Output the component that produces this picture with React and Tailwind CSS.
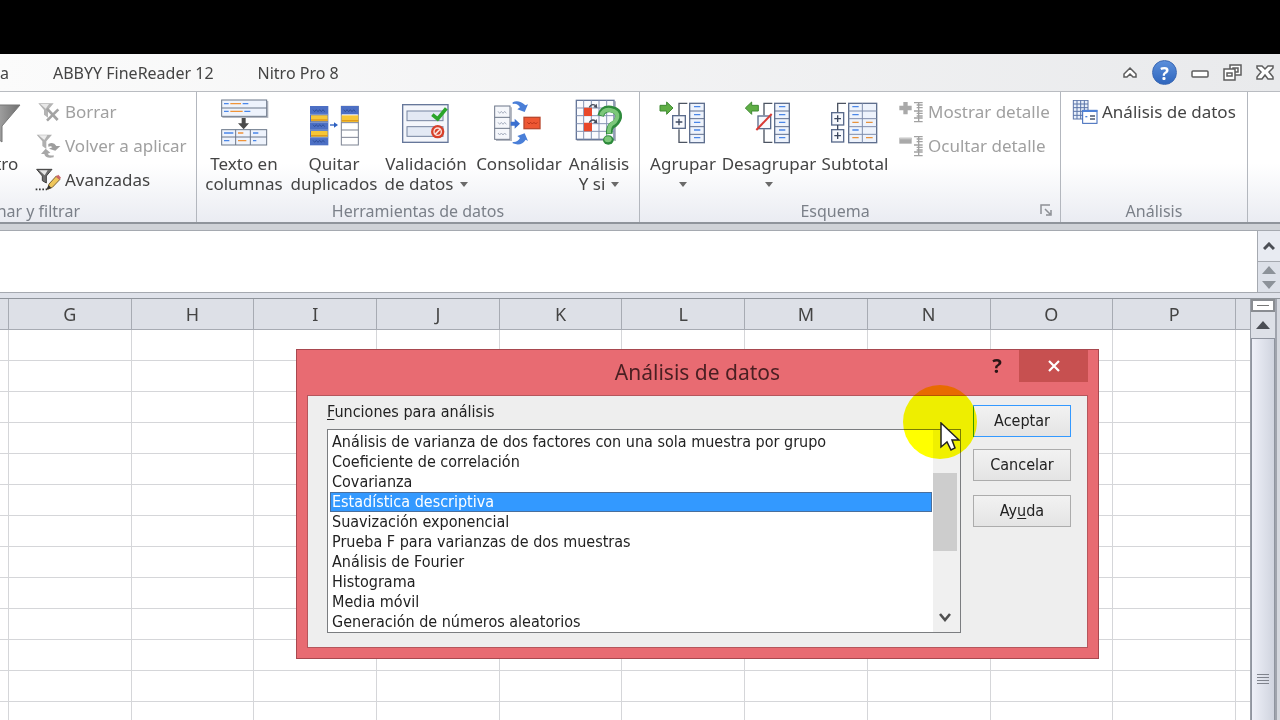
import React, { useState } from 'react';

// =========================================================================
// 1. DATA
// =========================================================================
const COLUMNS = ['G', 'H', 'I', 'J', 'K', 'L', 'M', 'N', 'O', 'P'];
const ROWS = Array.from({ length: 13 }, (_, i) => i + 1);

const FUNCTIONS = [
  'Análisis de varianza de dos factores con una sola muestra por grupo',
  'Coeficiente de correlación',
  'Covarianza',
  'Estadística descriptiva',
  'Suavización exponencial',
  'Prueba F para varianzas de dos muestras',
  'Análisis de Fourier',
  'Histograma',
  'Media móvil',
  'Generación de números aleatorios',
];

// =========================================================================
// 2. ICONS
// =========================================================================
const BigIcon = ({ viewBox, children }) => (
  <svg viewBox={viewBox} className="h-12 w-[50px] shrink-0" fill="none" aria-hidden="true">{children}</svg>
);

const SmallIcon = ({ viewBox, children }) => (
  <svg viewBox={viewBox} className="h-6 w-[26px] shrink-0" fill="none" aria-hidden="true">{children}</svg>
);

const TextColumnsIcon = () => (
  <BigIcon viewBox="72 24 150 144">
    <path d="M82 82H218V33" stroke="#b5b9c2" strokeWidth="4" />
    <rect x="80" y="30" width="135" height="49" fill="#eef3fc" stroke="#6b7688" strokeWidth="3" />
    <path d="M80 54H215" stroke="#6b7688" strokeWidth="3" />
    <path d="M87 41H101M143 41H160M87 64H101M148 64H166" stroke="#4a86e8" strokeWidth="4" />
    <path d="M106 41H138M106 64H143" stroke="#ef9338" strokeWidth="4" />
    <path d="M140 84H152V100H162L146 118L129 100H140Z" fill="#4a4a4a" />
    <rect x="80" y="119" width="135" height="46" fill="#eef3fc" stroke="#6b7688" strokeWidth="3" />
    <path d="M80 141H215M122 119V165M166 119V165" stroke="#6b7688" strokeWidth="3" />
    <path d="M87 129H115M174 129H190M87 152H103M174 152H184" stroke="#4a86e8" strokeWidth="4" />
    <path d="M129 129H145M129 152H154" stroke="#ef9338" strokeWidth="4" />
  </BigIcon>
);

const DuplicatesIcon = () => (
  <BigIcon viewBox="342 24 150 144">
    <rect x="345" y="48" width="55" height="118" fill="#4c6fc4" />
    <path d="M348 76H398V94H348ZM348 123H398V140H348Z" fill="#f7c637" />
    <path d="M348 90H398M348 137H398" stroke="#e09b1c" strokeWidth="4" />
    <path d="M354 59l5 6 5-6 5 6 5-6 5 6 5-6 5 6M354 104l5 6 5-6 5 6 5-6 5 6 5-6 5 6M354 151l5 6 5-6 5 6 5-6 5 6 5-6 5 6" stroke="#2f4f9c" strokeWidth="3" />
    <path d="M345 73H400M345 97H400M345 120H400M345 143H400" stroke="#a5b2d3" strokeWidth="2" />
    <path d="M405 105H420" stroke="#2c5fc0" strokeWidth="4" />
    <path d="M417 97L429 105L417 113Z" fill="#2c5fc0" />
    <rect x="439" y="49" width="51" height="116" fill="#fff" stroke="#7c8392" strokeWidth="3" />
    <path d="M438 48H491V73H438Z" fill="#4c6fc4" />
    <path d="M446 59l5 6 5-6 5 6 5-6 5 6 5-6 5 6" stroke="#2f4f9c" strokeWidth="3" />
    <path d="M440 76H490V96H440Z" fill="#f7c637" />
    <path d="M440 92H490" stroke="#e09b1c" strokeWidth="4" />
    <path d="M439 98H490M439 120H490M439 142H490" stroke="#7c8392" strokeWidth="3" />
  </BigIcon>
);

const ValidationIcon = () => (
  <BigIcon viewBox="64 24 150 144">
    <rect x="69" y="44" width="136" height="113" fill="#f4f6fb" stroke="#66779a" strokeWidth="4" />
    <rect x="82" y="63" width="108" height="29" fill="#e3e9f4" stroke="#75839f" strokeWidth="3" />
    <rect x="82" y="110" width="108" height="29" fill="#e3e9f4" stroke="#75839f" strokeWidth="3" />
    <path d="M158 74L174 87L200 55" stroke="#2aa52a" strokeWidth="11" />
    <circle cx="174" cy="125" r="20" fill="#d8402a" />
    <circle cx="174" cy="125" r="11" stroke="#fbe3dc" strokeWidth="4" />
    <path d="M166 133L182 117" stroke="#fbe3dc" strokeWidth="5" />
  </BigIcon>
);

const ConsolidateIcon = () => (
  <BigIcon viewBox="342 24 150 144">
    <path d="M348 151H394V52" stroke="#b5b9c2" strokeWidth="4" />
    <rect x="344" y="48" width="46" height="100" fill="#f5f7fb" stroke="#6d7789" strokeWidth="3" />
    <path d="M344 82H390M344 115H390" stroke="#6d7789" strokeWidth="3" />
    <path d="M354 64l5 6 5-6 5 6 5-6 5 6M354 97l5 6 5-6 5 6 5-6 5 6M354 129l5 6 5-6 5 6 5-6 5 6" stroke="#a8b0c0" strokeWidth="3" />
    <path d="M392 95H404V86L420 101L404 116V107H392Z" fill="#3a6fd0" />
    <path d="M398 37Q416 28 436 46L444 43L434 66L412 58L420 52Q412 38 398 42Z" fill="#4a7fd8" />
    <path d="M398 160Q424 170 437 149L444 153L434 130L412 138L420 144Q412 158 398 156Z" fill="#4a7fd8" />
    <rect x="432" y="82" width="48" height="34" fill="#ee5733" stroke="#b9482f" strokeWidth="4" />
    <path d="M442 97l5 5 5-5 5 5 5-5 5 5 5-5" stroke="#b83218" strokeWidth="3" />
  </BigIcon>
);

const WhatIfIcon = () => (
  <BigIcon viewBox="582 24 150 144">
    <path d="M590 151H706V34" stroke="#b5b9c2" strokeWidth="4" />
    <rect x="589" y="31" width="113" height="117" fill="#fafbfe" stroke="#66779a" strokeWidth="4" />
    <path d="M589 54H702M589 77H702M589 101H702M589 124H702M611 31V148M634 31V148M657 31V148M680 31V148" stroke="#8593b3" strokeWidth="3" />
    <path d="M612 53H636V78H612ZM612 98H636V124H612Z" fill="#e9482a" />
    <path d="M628 52Q634 40 646 46M628 98Q634 86 646 92" stroke="#444b5a" strokeWidth="4" />
    <path d="M640 52L652 54L650 41ZM640 98L652 100L650 87Z" fill="#444b5a" />
    <path d="M662 78Q668 54 692 57Q718 62 716 82Q712 98 696 106Q687 114 688 132" stroke="#2d8a3b" strokeWidth="20" />
    <path d="M664 76Q670 57 691 60Q714 64 712 81Q708 96 694 103Q686 112 687 130" stroke="#7cc77a" strokeWidth="12" />
    <ellipse cx="685" cy="150" rx="16" ry="14" fill="#2d8a3b" />
    <ellipse cx="684" cy="148" rx="11" ry="9" fill="#7cc77a" />
  </BigIcon>
);

const GroupIcon = () => (
  <BigIcon viewBox="54 24 150 144">
    <path d="M60 46H80V36L99 54L80 73V63H60Z" fill="#5fae45" stroke="#3f8a33" strokeWidth="3" />
    <path d="M142 40H117V76M117 118V157H142" stroke="#4c5462" strokeWidth="4" />
    <rect x="98" y="77" width="38" height="38" fill="#f7f9fd" stroke="#5a6b8c" strokeWidth="4" />
    <path d="M107 96H127M117 86V106" stroke="#3c4860" strokeWidth="4" />
    <rect x="149" y="40" width="44" height="118" fill="#eef3fc" stroke="#5f6f8e" strokeWidth="4" />
    <path d="M149 63H193M149 86H193M149 110H193M149 133H193" stroke="#5f6f8e" strokeWidth="3" />
    <path d="M162 50H181M162 74H181M162 97H181M162 120H181M162 143H181" stroke="#4a86e8" strokeWidth="4" />
  </BigIcon>
);

const UngroupIcon = () => (
  <BigIcon viewBox="315 24 150 144">
    <path d="M358 46H338V36L319 54L338 73V63H358Z" fill="#5fae45" stroke="#3f8a33" strokeWidth="3" />
    <path d="M400 40H375V76M375 118V157H400" stroke="#4c5462" strokeWidth="4" />
    <rect x="357" y="78" width="38" height="38" fill="#f7f9fd" stroke="#5a6b8c" strokeWidth="4" />
    <path d="M352 120L398 72" stroke="#d93a35" strokeWidth="6" />
    <rect x="407" y="40" width="44" height="118" fill="#eef3fc" stroke="#5f6f8e" strokeWidth="4" />
    <path d="M407 63H451M407 86H451M407 110H451M407 133H451" stroke="#5f6f8e" strokeWidth="3" />
    <path d="M420 50H439M420 74H439M420 97H439M420 120H439M420 143H439" stroke="#4a86e8" strokeWidth="4" />
  </BigIcon>
);

const SubtotalIcon = () => (
  <BigIcon viewBox="573 24 150 144">
    <path d="M621 40H596V66" stroke="#4c5462" strokeWidth="4" />
    <rect x="578" y="68" width="36" height="37" fill="#f7f9fd" stroke="#5a6b8c" strokeWidth="4" />
    <rect x="578" y="119" width="36" height="37" fill="#f7f9fd" stroke="#5a6b8c" strokeWidth="4" />
    <path d="M586 86H606M596 76V96M586 137H606M596 127V147M596 105V119" stroke="#3c4860" strokeWidth="4" />
    <rect x="629" y="40" width="84" height="118" fill="#eef3fc" stroke="#5f6f8e" strokeWidth="4" />
    <path d="M629 63H713M629 86H713M629 110H713M629 133H713M670 40V158" stroke="#7f8dab" strokeWidth="3" />
    <path d="M640 50H659M640 74H659M640 120H659" stroke="#4a86e8" strokeWidth="4" />
    <path d="M640 97H659M681 97H701M640 143H659M681 143H701" stroke="#e8923c" strokeWidth="4" />
  </BigIcon>
);

const FunnelIcon = () => (
  <svg viewBox="0 0 48 48" className="h-12 w-12 shrink-0" aria-hidden="true">
    <defs>
      <linearGradient id="funnel" x1="0" x2="1">
        <stop offset="0" stopColor="#d5d5d5" />
        <stop offset="1" stopColor="#6f6f6f" />
      </linearGradient>
    </defs>
    <path d="M2 7H46L28 28V44L20 38V28Z" fill="url(#funnel)" stroke="#777" />
  </svg>
);

const ClearFilterIcon = () => (
  <SmallIcon viewBox="104 150 78 72">
    <path d="M114 160H160L143 180V203L131 194V180Z" fill="#b4b4b4" />
    <path d="M120 162H146L136 176Z" fill="#e8e8e8" />
    <path d="M140 176L172 210M174 178L140 212" stroke="#a3a3a3" strokeWidth="8" />
  </SmallIcon>
);

const ReapplyIcon = () => (
  <SmallIcon viewBox="104 252 78 72">
    <path d="M109 254H155L138 274V297L126 288V274Z" fill="#b0b0b0" />
    <path d="M115 256H141L132 270Z" fill="#ececec" />
    <path d="M144 282Q160 274 168 288L180 288L165 302L146 296L156 292Q152 286 144 290Z" fill="#9d9d9d" />
    <path d="M160 322Q134 326 132 312L122 312L136 296L150 308L142 311Q146 319 160 316Z" fill="#a8a8a8" />
  </SmallIcon>
);

const AdvancedFilterIcon = () => (
  <SmallIcon viewBox="104 350 78 72">
    <path d="M109 354H155L138 374V395L126 388V374Z" fill="#6d6d6d" stroke="#3f3f3f" strokeWidth="3" />
    <path d="M116 357H142L133 372Z" fill="#e5e5e5" />
    <path d="M106 414H140" stroke="#333" strokeWidth="5" strokeDasharray="5 5" />
    <path d="M142 414L146 398L168 374L179 384L156 408Z" fill="#efc65a" stroke="#7a6030" strokeWidth="3" />
    <path d="M166 376L174 370L182 379L177 385Z" fill="#c96868" />
    <path d="M138 415L145 401L153 410Z" fill="#333" />
  </SmallIcon>
);

const DetailTicks = () => (
  <path d="M72 36H98M80 43H98M80 51H98M72 61H98M80 68H98M80 76H98M72 82H98M72 93H98M86 36V93" stroke="#a2a2a2" strokeWidth="4" />
);

const ShowDetailIcon = () => (
  <SmallIcon viewBox="24 28 78 72">
    <path d="M40 34H53V45H65V59H53V71H40V59H28V45H40Z" fill="#a9a9a9" />
    <DetailTicks />
  </SmallIcon>
);

const HideDetailIcon = () => (
  <SmallIcon viewBox="24 28 78 72">
    <path d="M28 39H65V57H28Z" fill="#a9a9a9" />
    <path d="M28 42H65" stroke="#c9c9c9" strokeWidth="4" />
    <DetailTicks />
  </SmallIcon>
);

const DataAnalysisIcon = () => (
  <SmallIcon viewBox="36 150 78 72">
    <rect x="40" y="151" width="44" height="56" fill="#e9f0fb" stroke="#5a74a8" strokeWidth="3" />
    <path d="M40 162H84M40 173H84M40 184H84M40 196H84M51 151V207M62 151V207M73 151V207" stroke="#5a74a8" strokeWidth="3" />
    <rect x="68" y="181" width="43" height="39" fill="#fff" stroke="#3764b8" strokeWidth="3" />
    <path d="M67 183H112" stroke="#4f82d8" strokeWidth="6" />
    <path d="M90 198H105M90 207H105" stroke="#4c5a70" strokeWidth="4" />
    <path d="M76 200H82" stroke="#4f82d8" strokeWidth="4" />
  </SmallIcon>
);

const Caret = () => (
  <svg viewBox="0 0 8 5" className="inline-block h-[5px] w-2" aria-hidden="true">
    <path d="M0 0H8L4 5Z" fill="#6a6a6a" />
  </svg>
);

// =========================================================================
// 3. RIBBON
// =========================================================================
const RibbonGroup = ({ title, className = '', titleClass = '', children, launcher }) => (
  <section className={`flex shrink-0 flex-col border-r border-[#b3b7be] ${className}`}>
    <div className="flex flex-1">{children}</div>
    <div className={`relative flex h-[22px] items-center justify-center whitespace-nowrap text-base text-[#7b8089] ${titleClass}`}>
      {title}
      {launcher && (
        <button aria-label={`Opciones de ${title}`} className="absolute right-2 top-1">
          <svg viewBox="0 0 12 12" className="h-3 w-3" fill="none" stroke="#8d9095">
            <path d="M1 10V1H10M5 5L10 10M11 6V11H6" strokeWidth="1.5" />
          </svg>
        </button>
      )}
    </div>
  </section>
);

const BigButton = ({ icon, lines, caret, className = '' }) => (
  <button className={`flex shrink-0 flex-col items-center pt-1.5 ${className}`}>
    {icon}
    <span className="mt-2 flex flex-col items-center whitespace-nowrap leading-5">
      <span>{lines[0]}</span>
      {(lines[1] || caret) && (
        <span className="flex h-5 items-center gap-1.5">
          {lines[1]}
          {caret && <Caret />}
        </span>
      )}
    </span>
  </button>
);

const SmallButton = ({ icon, label, disabled }) => (
  <button
    disabled={disabled}
    className={`flex h-[34px] items-center gap-1 whitespace-nowrap ${disabled ? 'text-[#a0a0a0]' : 'text-[#444444]'}`}
  >
    {icon}
    {label}
  </button>
);

const TabRow = () => (
  <header className="flex h-[38px] shrink-0 items-center justify-between border-b border-[#b9bcc1] bg-linear-to-r from-[#fbfbfb] to-[#e9eaec] text-[#444444]">
    <nav className="flex gap-11 whitespace-nowrap">
      <a href="#vista" className="flex w-[9px] justify-end">Vista</a>
      <a href="#abbyy">ABBYY FineReader 12</a>
      <a href="#nitro">Nitro Pro 8</a>
    </nav>
    <div className="flex items-center gap-3.5 pr-1.5">
      <button aria-label="Minimizar la cinta">
        <svg viewBox="0 0 16 14" className="h-3.5 w-4" fill="#fff" stroke="#5d5d5d" strokeWidth="1.5">
          <path d="M8 2L14 8V11H11L8 8L5 11H2V8Z" />
        </svg>
      </button>
      <button aria-label="Ayuda" className="flex size-[25px] items-center justify-center rounded-full border border-[#3a68b4] bg-linear-to-b from-[#5b8fdb] to-[#2f66bd] text-lg font-bold text-white">?</button>
      <button aria-label="Minimizar">
        <svg viewBox="0 0 18 14" className="h-3.5 w-[18px]" fill="#fff" stroke="#5d5d5d" strokeWidth="1.5">
          <rect x="1" y="5" width="16" height="6" rx="1" />
        </svg>
      </button>
      <button aria-label="Restaurar">
        <svg viewBox="0 0 19 17" className="h-[17px] w-[19px]" fill="#fff" stroke="#5d5d5d" strokeWidth="1.5">
          <path d="M7 1H18V11H7Z" />
          <path d="M10 4H15V8H10Z" />
          <path d="M1 5H12V16H1Z" />
          <path d="M4 9H9V12H4Z" />
        </svg>
      </button>
      <button aria-label="Cerrar">
        <svg viewBox="0 0 18 15" className="h-[15px] w-[18px]" fill="#fff" stroke="#5d5d5d" strokeWidth="1.5">
          <path d="M1 1H6L9 4L12 1H17V3L13 7L17 12V14H12L9 10L6 14H1V12L5 7L1 3Z" />
        </svg>
      </button>
    </div>
  </header>
);

const Ribbon = () => (
  <div className="flex h-[132px] shrink-0 overflow-hidden border-b-2 border-[#8f949b] bg-linear-to-b from-white from-55% to-[#eaecf2] text-[17px] text-[#444444]">
    {/* This group runs off the left edge of the window */}
    <div className="flex w-[197px] shrink-0 justify-end overflow-hidden">
      <RibbonGroup title="Ordenar y filtrar" className="w-[366px]" titleClass="pl-3">
        <div className="flex flex-1 justify-end">
          <BigButton icon={<FunnelIcon />} lines={['Filtro']} className="w-[74px]" />
          <div className="flex w-[161px] flex-col pt-[3px]">
            <SmallButton disabled icon={<ClearFilterIcon />} label="Borrar" />
            <SmallButton disabled icon={<ReapplyIcon />} label="Volver a aplicar" />
            <SmallButton icon={<AdvancedFilterIcon />} label="Avanzadas" />
          </div>
        </div>
      </RibbonGroup>
    </div>
    <RibbonGroup title="Herramientas de datos" className="w-[443px]">
      <BigButton icon={<TextColumnsIcon />} lines={['Texto en', 'columnas']} className="w-[94px]" />
      <BigButton icon={<DuplicatesIcon />} lines={['Quitar', 'duplicados']} className="w-[86px]" />
      <BigButton icon={<ValidationIcon />} lines={['Validación', 'de datos']} caret className="w-[98px]" />
      <BigButton icon={<ConsolidateIcon />} lines={['Consolidar']} className="w-[88px]" />
      <BigButton icon={<WhatIfIcon />} lines={['Análisis', 'Y si']} caret className="w-[72px]" />
    </RibbonGroup>
    <RibbonGroup title="Esquema" className="w-[421px]" titleClass="pr-[30px]" launcher>
      <BigButton icon={<GroupIcon />} lines={['Agrupar']} caret className="w-[86px]" />
      <BigButton icon={<UngroupIcon />} lines={['Desagrupar']} caret className="w-[86px]" />
      <BigButton icon={<SubtotalIcon />} lines={['Subtotal']} className="w-[86px]" />
      <div className="flex flex-col pt-[3px]">
        <SmallButton disabled icon={<ShowDetailIcon />} label="Mostrar detalle" />
        <SmallButton disabled icon={<HideDetailIcon />} label="Ocultar detalle" />
      </div>
    </RibbonGroup>
    <RibbonGroup title="Análisis" className="w-[187px]">
      <div className="flex flex-col pt-[3px] pl-[11px]">
        <SmallButton icon={<DataAnalysisIcon />} label="Análisis de datos" />
      </div>
    </RibbonGroup>
  </div>
);

const FormulaBar = () => (
  <div className="flex h-[74px] shrink-0 border-t-[6px] border-b-[5px] border-t-[#cfd2d7] border-b-[#dfe2ea]">
    <input aria-label="Barra de fórmulas" className="min-w-0 flex-1 border-y border-[#a5a9b0] bg-white outline-none" />
    <div className="flex w-[23px] flex-col border-y border-l border-[#a5a9b0] bg-[#dde1e9]">
      <button aria-label="Contraer barra de fórmulas" className="flex flex-1 items-center justify-center border-b border-[#a5a9b0] bg-[#e8ebf2]">
        <svg viewBox="0 0 12 8" className="h-2 w-3" fill="none" stroke="#4b4e55" strokeWidth="3">
          <path d="M1 7L6 2L11 7" />
        </svg>
      </button>
      <div className="flex flex-1 flex-col items-center justify-around">
        <svg viewBox="0 0 14 8" className="h-2 w-3.5" fill="#8c9299"><path d="M7 0L14 8H0Z" /></svg>
        <svg viewBox="0 0 14 8" className="h-2 w-3.5" fill="#8c9299"><path d="M0 0H14L7 8Z" /></svg>
      </div>
    </div>
  </div>
);

// =========================================================================
// 4. SHEET
// =========================================================================
const Sheet = () => (
  <div className="flex min-h-0 flex-1 overflow-hidden border-t border-[#8f949b]">
    <div className="min-w-0 flex-1 overflow-hidden">
      <table className="w-full table-fixed border-separate border-spacing-0">
        <thead>
          <tr className="h-[31px] bg-[#dde0e7] text-lg text-[#444444]">
            <th className="w-[9px] border-r border-b border-[#a7abb3] p-0" />
            {COLUMNS.map(col => (
              <th key={col} scope="col" className="border-r border-b border-[#a7abb3] p-0 font-normal">{col}</th>
            ))}
            <th className="w-3.5 border-b border-[#a7abb3] p-0" />
          </tr>
        </thead>
        <tbody>
          {ROWS.map(row => (
            <tr key={row} className="h-[31px]">
              <td className="border-r border-b border-[#d5d6d9] p-0" />
              {COLUMNS.map(col => <td key={col} className="border-r border-b border-[#d5d6d9] p-0" />)}
              <td className="border-b border-[#d5d6d9] p-0" />
            </tr>
          ))}
        </tbody>
      </table>
    </div>
    <div className="flex w-[30px] shrink-0 border-l border-[#9a9fa8] bg-[#dde0e7]">
      <div className="flex w-6 flex-col">
        <div className="flex h-[13px] shrink-0 items-center justify-center border-2 border-[#8a8d92] bg-white">
          <div className="h-px w-3 bg-[#777777]" />
        </div>
        <button aria-label="Desplazar hacia arriba" className="flex h-[26px] shrink-0 items-center justify-center">
          <svg viewBox="0 0 14 8" className="h-2 w-3.5" fill="#4b4e55"><path d="M7 0L14 8H0Z" /></svg>
        </button>
        <div className="flex flex-1 flex-col items-center justify-end border border-b-0 border-[#8f949f] bg-linear-to-r from-[#eef0f8] to-[#d0d4df] pb-9">
          <div className="flex flex-col gap-0.5">
            <div className="h-px w-3 bg-[#7f838c]" />
            <div className="h-px w-3 bg-[#7f838c]" />
            <div className="h-px w-3 bg-[#7f838c]" />
            <div className="h-px w-3 bg-[#7f838c]" />
          </div>
        </div>
      </div>
      <div className="flex-1 border-l-2 border-[#a0a4ad] bg-[#d5d8df]" />
    </div>
  </div>
);

// =========================================================================
// 5. DIALOG
// =========================================================================
const DialogButton = ({ children, primary, className = '' }) => (
  <button
    className={`h-8 w-[98px] border bg-linear-to-b from-[#f2f2f2] to-[#e4e4e4] text-[#222222] ${primary ? 'border-[#3399ff]' : 'border-[#acacac]'} ${className}`}
  >
    {children}
  </button>
);

const AnalysisDialog = () => {
  const [selected, setSelected] = useState('Estadística descriptiva');

  return (
    <div
      role="dialog"
      aria-labelledby="dialog-title"
      className="absolute top-[349px] left-[296px] flex w-[803px] flex-col border border-[#a8484f] bg-[#e86b72] px-2.5 pb-2.5 font-['Noto_Sans','Open_Sans',sans-serif]"
    >
      <div className="relative flex h-[45px] items-center justify-center">
        <h2 id="dialog-title" className="text-[21px] text-[#4a1f22]">Análisis de datos</h2>
        <div className="absolute top-0 right-0 flex items-center">
          <button aria-label="Ayuda" className="w-11 text-xl font-bold text-[#2b1516]">?</button>
          <button aria-label="Cerrar" className="flex h-8 w-[69px] items-center justify-center bg-[#c75050]">
            <svg viewBox="0 0 12 12" className="h-3 w-3" stroke="#fff" strokeWidth="2.2">
              <path d="M1 1L11 11M11 1L1 11" />
            </svg>
          </button>
        </div>
      </div>

      <div className="flex gap-3 border border-[#b5565c] bg-[#eeeeee] pt-1 pr-4 pb-3.5 pl-[19px] text-base font-['DejaVu_Sans_Condensed','Noto_Sans',sans-serif]">
        <div className="min-w-0 flex-1">
          <div id="functions-label" className="h-[29px] leading-6 text-[#222222]">
            <span className="underline underline-offset-2">F</span>unciones para análisis
          </div>
          <div className="flex border border-[#7b7d80] bg-white">
            <ul role="listbox" aria-labelledby="functions-label" className="flex-1 pt-0.5 pl-0.5 text-[#222222]">
              {FUNCTIONS.map(name => (
                <li
                  key={name}
                  role="option"
                  aria-selected={name === selected}
                  onClick={() => setSelected(name)}
                  className={`h-5 truncate px-0.5 leading-5 ${name === selected ? 'bg-[#3399ff] text-white outline-1 -outline-offset-1 outline-[#4a6f9c]' : ''}`}
                >
                  {name}
                </li>
              ))}
            </ul>
            <div className="ml-px flex w-[27px] flex-col items-center bg-[#f0f0f0] pr-[3px]">
              <div className="mt-[43px] h-[78px] w-6 bg-[#cdcdcd]" />
              <button aria-label="Bajar" className="mt-auto mb-2.5">
                <svg viewBox="0 0 12 9" className="h-[9px] w-3" fill="none" stroke="#505050" strokeWidth="2.6">
                  <path d="M1 1L6 7L11 1" />
                </svg>
              </button>
            </div>
          </div>
        </div>
        <div className="flex flex-col pt-[5px]">
          <DialogButton primary>Aceptar</DialogButton>
          <DialogButton className="mt-3">Cancelar</DialogButton>
          <DialogButton className="mt-3.5">
            Ay<span className="underline underline-offset-2">u</span>da
          </DialogButton>
        </div>
      </div>
    </div>
  );
};

// Click highlight with the mouse pointer on top of it
const Pointer = () => (
  <>
    <div className="pointer-events-none absolute top-[385px] left-[903px] size-[74px] rounded-full bg-[#ffff00] mix-blend-multiply" />
    <svg viewBox="0 0 20 30" className="pointer-events-none absolute top-[422px] left-[940px] h-[30px] w-5" aria-hidden="true">
      <path d="M1 1V25L7 20L11 28L15 26L12 18H19Z" fill="#fff" stroke="#222" strokeWidth="1.5" />
    </svg>
  </>
);

// =========================================================================
// 6. MAIN
// =========================================================================
export default function App() {
  return (
    <div className="relative flex h-screen flex-col overflow-hidden bg-white font-['Noto_Sans','Open_Sans',sans-serif] text-base">
      <div className="h-[54px] shrink-0 bg-black" />
      <TabRow />
      <Ribbon />
      <FormulaBar />
      <Sheet />
      <AnalysisDialog />
      <Pointer />
    </div>
  );
}
